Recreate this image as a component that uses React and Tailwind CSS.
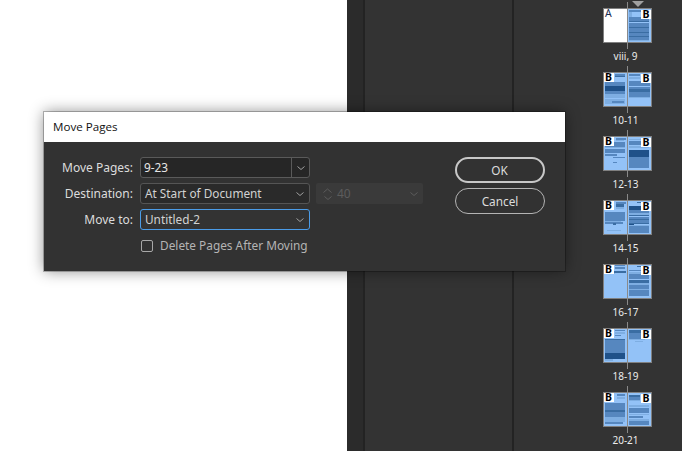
import React from 'react';

const L = '#93c2f7';
const M = '#5687bf';
const S = '#7eaee2';
const T = '#3a6da3';
const D = '#1f5189';

// [x, y, w, h, colour] in a 49x35 thumbnail, the left page ends at x=24
const spreads = [
  {
    label: 'viii, 9',
    leftBadge: 'A',
    rects: [
      [1, 1, 23, 33, '#ffffff'],
      [26, 2, 12, 2, M], [26, 4, 3, 5, S],
      [26, 9, 20, 4, M], [26, 13, 20, 1, T], [26, 15, 20, 4, M], [26, 19, 20, 1, T],
      [26, 20, 20, 4, M], [26, 24, 20, 1, T], [26, 25, 20, 3, M], [26, 28, 20, 1, T],
      [26, 29, 20, 3, M], [26, 32, 20, 1, S],
    ],
  },
  {
    label: '10-11',
    rects: [
      [12, 2, 10, 2, M], [12, 4, 10, 1, T], [2, 10, 20, 4, M], [2, 14, 20, 5, D],
      [2, 19, 20, 3, M], [2, 22, 20, 4, S], [2, 27, 20, 5, S], [9, 29, 12, 2, M],
      [26, 2, 11, 2, M], [26, 5, 11, 2, S], [26, 9, 21, 5, M], [26, 15, 21, 2, M],
      [26, 17, 21, 3, T], [26, 20, 21, 5, M], [26, 25, 21, 1, S],
    ],
  },
  {
    label: '12-13',
    rects: [
      [13, 2, 10, 2, M], [13, 4, 8, 1, S], [2, 6, 20, 5, M], [2, 11, 20, 1, S],
      [2, 13, 20, 4, M], [2, 18, 12, 2, M], [10, 21, 12, 1, M], [10, 26, 4, 1, M],
      [26, 3, 12, 1, S], [26, 5, 12, 4, M], [26, 10, 20, 2, S], [26, 14, 20, 7, D],
      [26, 21, 20, 2, M], [26, 23, 20, 9, M],
    ],
  },
  {
    label: '14-15',
    rects: [
      [13, 2, 10, 2, M], [13, 4, 8, 3, T], [13, 7, 8, 2, S], [2, 12, 20, 9, M],
      [2, 21, 16, 1, S], [2, 22, 18, 2, M], [10, 23, 3, 2, T], [4, 30, 14, 1, S],
      [34, 2, 6, 1, T], [26, 6, 20, 4, D], [26, 10, 20, 3, M], [26, 13, 20, 2, S],
      [26, 15, 20, 1, T], [26, 17, 20, 2, M], [26, 19, 20, 1, T], [26, 20, 20, 3, M],
      [26, 23, 20, 1, T], [26, 24, 5, 1, D], [26, 25, 20, 1, S], [26, 26, 20, 7, M],
    ],
  },
  {
    label: '16-17',
    rects: [
      [12, 1, 10, 1, M], [12, 3, 10, 2, M], [2, 7, 21, 2, T], [2, 9, 10, 1, S],
      [34, 2, 6, 1, T], [26, 6, 14, 1, M], [26, 8, 14, 2, S], [26, 10, 20, 5, M],
      [26, 16, 20, 3, T], [26, 19, 20, 2, S], [26, 21, 20, 4, M], [26, 25, 20, 1, S],
      [26, 26, 20, 6, M],
    ],
  },
  {
    label: '18-19',
    rects: [
      [12, 2, 10, 1, M], [12, 4, 10, 2, S], [12, 7, 6, 1, M], [2, 11, 20, 1, T],
      [2, 12, 20, 6, M], [2, 18, 20, 7, M], [2, 25, 20, 6, D], [2, 31, 8, 2, S],
      [26, 2, 12, 3, T], [26, 5, 12, 3, M], [26, 8, 20, 3, M], [26, 11, 16, 1, S],
      [32, 13, 8, 1, S],
    ],
  },
  {
    label: '20-21',
    rects: [
      [14, 2, 8, 2, M], [14, 5, 8, 2, S], [2, 11, 20, 7, M], [2, 18, 20, 2, T],
      [2, 20, 20, 5, M], [2, 25, 20, 5, S], [2, 30, 18, 2, M],
      [26, 3, 11, 2, T], [26, 5, 11, 3, M], [26, 8, 11, 1, S], [26, 13, 20, 2, S],
      [26, 16, 20, 5, M], [26, 22, 20, 1, S], [26, 24, 14, 2, M], [26, 27, 20, 2, S],
      [26, 29, 20, 4, M],
    ],
  },
];

const Chevron = ({ color = '#a0a0a0' }) => (
  <svg width="8" height="4" viewBox="0 0 8 4" fill="none" stroke={color} strokeWidth="1">
    <path d="M0.5 0.5 L4 3.5 L7.5 0.5" />
  </svg>
);

const Spread = ({ spread }) => (
  <div className="relative flex h-[64px] w-[49px] shrink-0 flex-col items-center">
    <div className="relative h-[35px] w-[49px] shrink-0">
      <svg width="49" height="35" viewBox="0 0 49 35" shapeRendering="crispEdges" className="block">
        <rect width="49" height="35" fill="#808080" />
        <rect x="1" y="1" width="47" height="33" fill={L} />
        {spread.rects.map((r, i) => (
          <rect key={i} x={r[0]} y={r[1]} width={r[2]} height={r[3]} fill={r[4]} />
        ))}
      </svg>
      {/* spine line sticks out above and below the spread */}
      <div className="absolute top-[-6px] left-[24px] h-[47px] w-px bg-[#8a8a8a]" />
      <div className="absolute top-[1px] left-[1px] flex h-[9px] w-[10px] items-center bg-white pl-[1px] text-[10.5px] leading-none font-bold text-black">
        {spread.leftBadge === 'A' ? <span className="font-normal text-[#1c2f52]">A</span> : 'B'}
      </div>
      <div className="absolute top-[2px] right-[1px] flex h-[9px] w-[10px] items-center justify-center bg-white text-[10.5px] leading-none font-bold text-black">
        B
      </div>
    </div>
    <div className="mt-[7px] mr-[4px] text-[10px] leading-[12px] whitespace-nowrap text-[#ececec]">{spread.label}</div>
  </div>
);

const Combo = ({ children, editable, focused }) => (
  <div
    className={`flex h-[21px] items-center rounded-[3px] border text-[11.8px] ${
      focused
        ? 'border-[#4b9ce8] bg-[#333333] text-[#d2d2d2]'
        : editable
          ? 'border-[#5a5a5a] bg-[#262626] text-[#e6e6e6]'
          : 'border-[#555555] bg-[#2a2a2a] text-[#d2d2d2]'
    }`}
  >
    <span className={`flex-1 ${editable ? 'pl-[3px]' : 'pl-[4px]'}`}>{children}</span>
    <span className={`flex h-full w-[18px] items-center justify-center ${editable ? 'border-l border-[#5a5a5a]' : ''}`}>
      <Chevron />
    </span>
  </div>
);

const Label = ({ children }) => (
  <div className="pr-[7px] text-right text-[12px] leading-[21px] text-[#dcdcdc]">{children}</div>
);

export default function App() {
  return (
    <div className="relative flex h-[451px] w-[682px] overflow-hidden bg-white font-['Noto_Sans',sans-serif]">
      <div className="w-[347px] shrink-0 bg-white" />
      <div className="w-[16px] shrink-0 bg-[#2b2b2b]" />
      <div className="w-[2px] shrink-0 bg-[#232323]" />
      <div className="w-[147px] shrink-0 bg-[#333333]" />
      <div className="w-[2px] shrink-0 bg-[#232323]" />
      <div className="relative flex flex-1 flex-col items-center bg-[#333333] pt-[8px] pr-[79px] pl-[89px]">
        <div className="absolute top-[1px] left-[118px] h-0 w-0 border-x-[6px] border-t-[6px] border-x-transparent border-t-[#a0a0a0]" />
        {spreads.map((s) => (
          <Spread key={s.label} spread={s} />
        ))}
      </div>

      <div className="absolute top-[112px] left-[44px] flex h-[159px] w-[521px] flex-col shadow-[0_0_14px_rgba(0,0,0,0.45),0_0_0_1px_rgba(0,0,0,0.25)]">
        <div className="flex h-[30px] shrink-0 items-center bg-white pl-[9px] font-['Open_Sans',sans-serif] text-[11.6px] text-[#111111]">
          Move Pages
        </div>
        <div className="flex flex-1 justify-between bg-[#323232] pt-[15px] pr-[20px]">
          <div className="grid grid-cols-[96px_170px_auto] content-start gap-y-[5px]">
            <Label>Move Pages:</Label>
            <Combo editable>9-23</Combo>
            <div />
            <Label>Destination:</Label>
            <Combo>At Start of Document</Combo>
            <div className="ml-[6px] flex h-[21px] w-[107px] items-center rounded-[2px] bg-[#3a3a3a] text-[12px] text-[#5c5c5c]">
              <span className="flex w-[20px] flex-col items-center gap-[3px] pl-[3px]">
                <svg width="9" height="5" viewBox="0 0 9 5" fill="none" stroke="#5c5c5c"><path d="M0.5 4.5 L4.5 1 L8.5 4.5" /></svg>
                <Chevron color="#5c5c5c" />
              </span>
              <span className="flex-1 pl-[1px]">40</span>
              <span className="pr-[5px]"><Chevron color="#5c5c5c" /></span>
            </div>
            <Label>Move to:</Label>
            <Combo focused>Untitled-2</Combo>
            <div />
            <div />
            <label className="flex h-[21px] items-center gap-[7px] pl-[1px] text-[11.85px] text-[#b4b4b4]">
              <span className="h-[12px] w-[12px] rounded-[2px] border border-[#a8a8a8]" />
              <span className="whitespace-nowrap">Delete Pages After Moving</span>
            </label>
            <div />
          </div>
          <div className="flex w-[90px] flex-col gap-[5px]">
            <button className="h-[26px] rounded-full border-2 border-[#c8c8c8] pt-[1px] pr-[1px] text-[11.8px] text-[#dcdcdc]">OK</button>
            <button className="h-[26px] rounded-full border border-[#b4b4b4] pt-[1px] text-[11.8px] text-[#dcdcdc]">Cancel</button>
          </div>
        </div>
      </div>
    </div>
  );
}
